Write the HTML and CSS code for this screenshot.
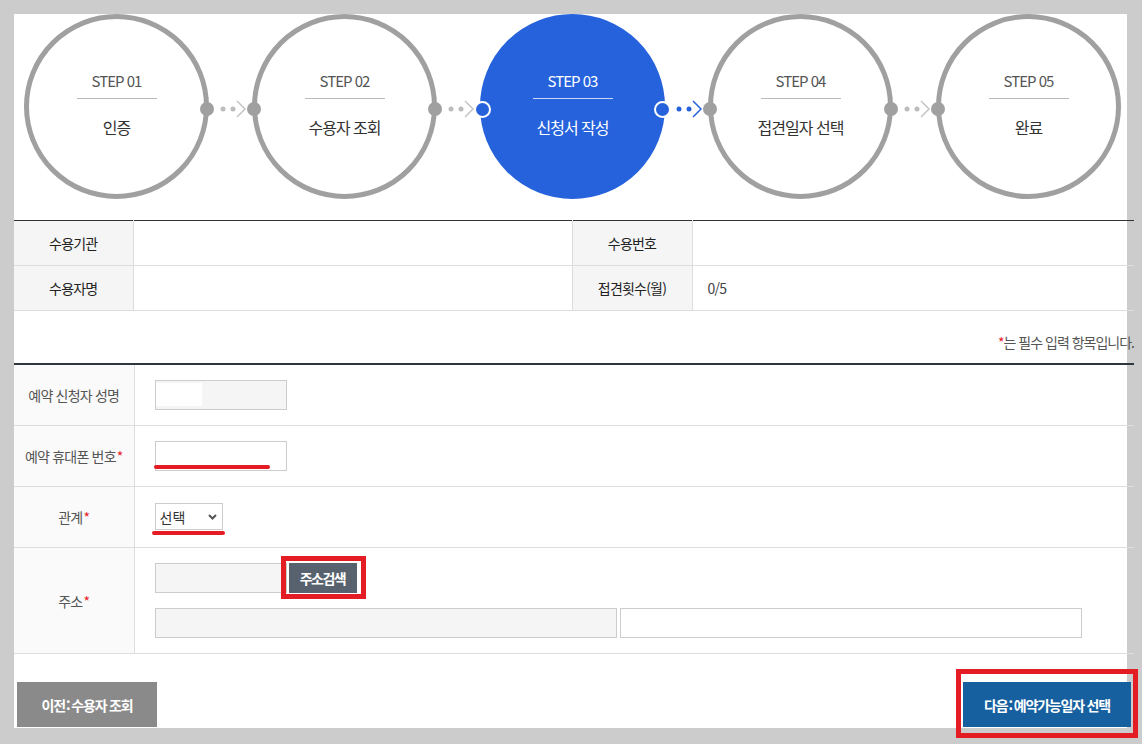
FILE: index.html
```html
<!DOCTYPE html>
<html lang="ko">
<head>
    <meta charset="UTF-8">
    <meta name="viewport" content="width=device-width, initial-scale=1.0">
    <title>접견 예약 - 신청서 작성</title>
    <link rel="stylesheet" href="styles.css">
</head>
<body>
    <div class="page">
        <div class="inner">
            <!-- 단계 표시 -->
            <ul class="steps">
                <li class="step">
                    <span class="step-no">STEP 01</span>
                    <span class="step-name">인증</span>
                </li>
                <li class="link">
                    <svg width="43" height="20" viewBox="0 0 43 20"><circle cx="14" cy="10" r="2.5"/><circle cx="24" cy="10" r="2.5"/><polyline points="28,2 36,10 28,18"/></svg>
                </li>
                <li class="step">
                    <span class="step-no">STEP 02</span>
                    <span class="step-name">수용자 조회</span>
                </li>
                <li class="link">
                    <svg width="43" height="20" viewBox="0 0 43 20"><circle cx="14" cy="10" r="2.5"/><circle cx="24" cy="10" r="2.5"/><polyline points="28,2 36,10 28,18"/></svg>
                </li>
                <li class="step on">
                    <span class="step-no">STEP 03</span>
                    <span class="step-name">신청서 작성</span>
                </li>
                <li class="link on">
                    <svg width="43" height="20" viewBox="0 0 43 20"><circle cx="14" cy="10" r="2.5"/><circle cx="24" cy="10" r="2.5"/><polyline points="28,2 36,10 28,18"/></svg>
                </li>
                <li class="step">
                    <span class="step-no">STEP 04</span>
                    <span class="step-name">접견일자 선택</span>
                </li>
                <li class="link">
                    <svg width="43" height="20" viewBox="0 0 43 20"><circle cx="14" cy="10" r="2.5"/><circle cx="24" cy="10" r="2.5"/><polyline points="28,2 36,10 28,18"/></svg>
                </li>
                <li class="step">
                    <span class="step-no">STEP 05</span>
                    <span class="step-name">완료</span>
                </li>
            </ul>

            <!-- 수용자 정보 -->
            <table class="info">
                <colgroup>
                    <col style="width:119px">
                    <col style="width:439px">
                    <col style="width:120px">
                    <col>
                </colgroup>
                <tr>
                    <th>수용기관</th>
                    <td></td>
                    <th>수용번호</th>
                    <td></td>
                </tr>
                <tr>
                    <th>수용자명</th>
                    <td></td>
                    <th>접견횟수(월)</th>
                    <td>0/5</td>
                </tr>
            </table>

            <p class="note"><span class="req">*</span>는 필수 입력 항목입니다.</p>

            <!-- 신청서 입력 -->
            <table class="form">
                <colgroup>
                    <col style="width:120px">
                    <col>
                </colgroup>
                <tr>
                    <th>예약 신청자 성명</th>
                    <td><input type="text" class="field gray masked" readonly></td>
                </tr>
                <tr>
                    <th>예약 휴대폰 번호<span class="req">*</span></th>
                    <td>
                        <span class="mark">
                            <input type="text" class="field">
                            <span class="underline phone-line"></span>
                        </span>
                    </td>
                </tr>
                <tr>
                    <th>관계<span class="req">*</span></th>
                    <td>
                        <span class="mark select-box">
                            <select>
                                <option>선택</option>
                            </select>
                            <svg class="arrow" width="9" height="6" viewBox="0 0 9 6"><polyline points="1,1 4.5,4.5 8,1"/></svg>
                            <span class="underline select-line"></span>
                        </span>
                    </td>
                </tr>
                <tr>
                    <th>주소<span class="req">*</span></th>
                    <td>
                        <div class="addr-row">
                            <input type="text" class="field gray" readonly>
                            <button class="btn-search">주소검색</button>
                        </div>
                        <div class="addr-row">
                            <input type="text" class="field gray wide" readonly>
                            <input type="text" class="field wide">
                        </div>
                    </td>
                </tr>
            </table>

            <div class="actions">
                <button class="btn btn-prev">이전<span class="colon">:</span>수용자 조회</button>
                <button class="btn btn-next">다음<span class="colon">:</span>예약가능일자 선택</button>
            </div>
        </div>
    </div>
</body>
</html>
```

FILE: styles.css
```css
/* 기본 */
html, body {
    margin: 0;
    padding: 0;
}

body {
    background-color: #cccccc;
    padding: 14px 0 0 14px;
    height: 744px;
    box-sizing: border-box;
    overflow: hidden;
    font-family: "Noto Sans CJK KR", "Noto Sans", sans-serif;
    color: #333;
}

.page {
    width: 1113px;
    height: 714px;
    background-color: #fff;
}

.inner {
    width: 1120px;
}

/* 단계 */
.steps {
    display: flex;
    list-style: none;
    margin: 0 0 21px;
    padding: 0 0 0 10px;
}

.step {
    position: relative;
    width: 185px;
    height: 185px;
    box-sizing: border-box;
    border: 5px solid #a0a0a0;
    border-radius: 50%;
    display: flex;
    flex-direction: column;
    align-items: center;
    justify-content: center;
    padding-bottom: 5px;
}

.step::before,
.step::after {
    content: "";
    position: absolute;
    top: calc(50% - 5px);
    width: 14px;
    height: 14px;
    border-radius: 50%;
    background-color: #a0a0a0;
}

.step::before { left: -10px; }
.step::after { right: -10px; }
.step:first-child::before,
.step:last-child::after { display: none; }

.step-no {
    font-size: 15px;
    line-height: 20px;
    letter-spacing: -1px;
    color: #555;
    padding-bottom: 7px;
    width: 80px;
    text-align: center;
    border-bottom: 1px solid #bbb;
}

.step-name {
    font-size: 16px;
    line-height: 20px;
    letter-spacing: -1px;
    color: #333;
    margin-top: 18px;
}

.step.on {
    background-color: #2562db;
    border-color: #2562db;
}

.step.on .step-no {
    color: #fff;
    border-bottom-color: rgba(255, 255, 255, 0.75);
}

.step.on .step-name {
    color: #fff;
}

.step.on::before,
.step.on::after {
    width: 17px;
    height: 17px;
    box-sizing: border-box;
    border: 2px solid #fff;
    background-color: #2562db;
    top: calc(50% - 6px);
}

.step.on::before { left: -11px; }
.step.on::after { right: -11px; }

.link {
    width: 43px;
    display: flex;
    align-items: center;
    margin-top: 4px;
}

.link svg { display: block; }
.link circle { fill: #bcbcbc; }
.link polyline {
    fill: none;
    stroke: #c4c4c4;
    stroke-width: 1.5;
}

.link.on circle { fill: #2562db; }
.link.on polyline { stroke: #2562db; }

/* 수용자 정보 */
.info,
.form {
    width: 1120px;
    border-collapse: collapse;
    table-layout: fixed;
}

.info {
    border-top: 1px solid #333;
}

.info th,
.info td {
    height: 44px;
    padding: 0;
    border-bottom: 1px solid #ddd;
    font-size: 14px;
    letter-spacing: -0.8px;
    font-weight: normal;
}

.info th {
    background-color: #f5f5f5;
    color: #222;
    border-left: 1px solid #ddd;
    border-right: 1px solid #ddd;
}

.info tr th:first-child {
    border-left: none;
}

.info td {
    padding-left: 15px;
    color: #444;
}

.note {
    margin: 21px 0 11px;
    text-align: right;
    font-size: 14px;
    line-height: 20px;
    letter-spacing: -1px;
    color: #555;
}

.req {
    color: #e8202a;
    margin-left: 1px;
}

/* 신청서 입력 */
.form {
    border-top: 2px solid #2f3640;
}

.form th,
.form td {
    border-bottom: 1px solid #ddd;
}

.form th {
    background-color: #fafafa;
    border-right: 1px solid #ddd;
    font-weight: normal;
    font-size: 14px;
    letter-spacing: -0.8px;
    color: #555;
    padding: 0;
}

.form td {
    height: 30px;
    padding: 15px 20px;
    vertical-align: top;
}

.field {
    display: block;
    width: 132px;
    height: 30px;
    box-sizing: border-box;
    border: 1px solid #ccc;
    background-color: #fff;
    margin: 0;
    padding: 0 6px;
    font-family: inherit;
    font-size: 14px;
    outline: none;
}

.field.gray {
    background-color: #f5f5f5;
}

.field.masked {
    background: linear-gradient(#fff, #fff) no-repeat 0 2px / 46px 23px, #f5f5f5;
}

.field.wide {
    width: 462px;
}

.mark {
    position: relative;
    display: inline-block;
    vertical-align: top;
}

.underline {
    position: absolute;
    height: 4px;
    border-radius: 2px;
    background-color: #e41c24;
}

.phone-line {
    left: -1px;
    top: 24px;
    width: 116px;
}

.select-box select {
    display: block;
    width: 68px;
    height: 27px;
    margin: 1px 0 0;
    box-sizing: border-box;
    border: 1px solid #ccc;
    background-color: #fff;
    padding: 0 4px;
    font-family: inherit;
    font-size: 14px;
    color: #333;
    -webkit-appearance: none;
    appearance: none;
}

.select-box .arrow {
    position: absolute;
    right: 6px;
    top: 12px;
}

.select-box .arrow polyline {
    fill: none;
    stroke: #555;
    stroke-width: 2;
}

.select-line {
    left: -3px;
    top: 29px;
    width: 73px;
}

.addr-row {
    display: flex;
    gap: 3px;
}

.addr-row + .addr-row {
    margin-top: 15px;
}

.btn-search {
    position: relative;
    width: 68px;
    height: 30px;
    margin-left: -1px;
    border: none;
    background-color: #57626e;
    color: #fff;
    font-family: inherit;
    font-size: 14px;
    font-weight: bold;
    letter-spacing: -1.5px;
    padding: 0;
}

.btn-search::after {
    content: "";
    position: absolute;
    left: -8px;
    right: -9px;
    top: -7px;
    bottom: -6px;
    border: 5px solid #e41c24;
}

/* 하단 버튼 */
.actions {
    display: flex;
    justify-content: space-between;
    margin-top: 28px;
    padding: 0 3px;
}

.btn {
    height: 45px;
    border: none;
    padding: 0;
    color: #fff;
    font-family: inherit;
    font-size: 14px;
    font-weight: bold;
    letter-spacing: -1.2px;
}

.btn .colon {
    margin: 0 2px 0 1px;
}

.btn-prev {
    width: 140px;
    background-color: #8a8a8a;
}

.btn-next {
    position: relative;
    width: 168px;
    background-color: #1660a0;
}

.btn-next::after {
    content: "";
    position: absolute;
    left: -7px;
    right: -7px;
    top: -13px;
    bottom: -11px;
    border: 5px solid #e41c24;
}
```
